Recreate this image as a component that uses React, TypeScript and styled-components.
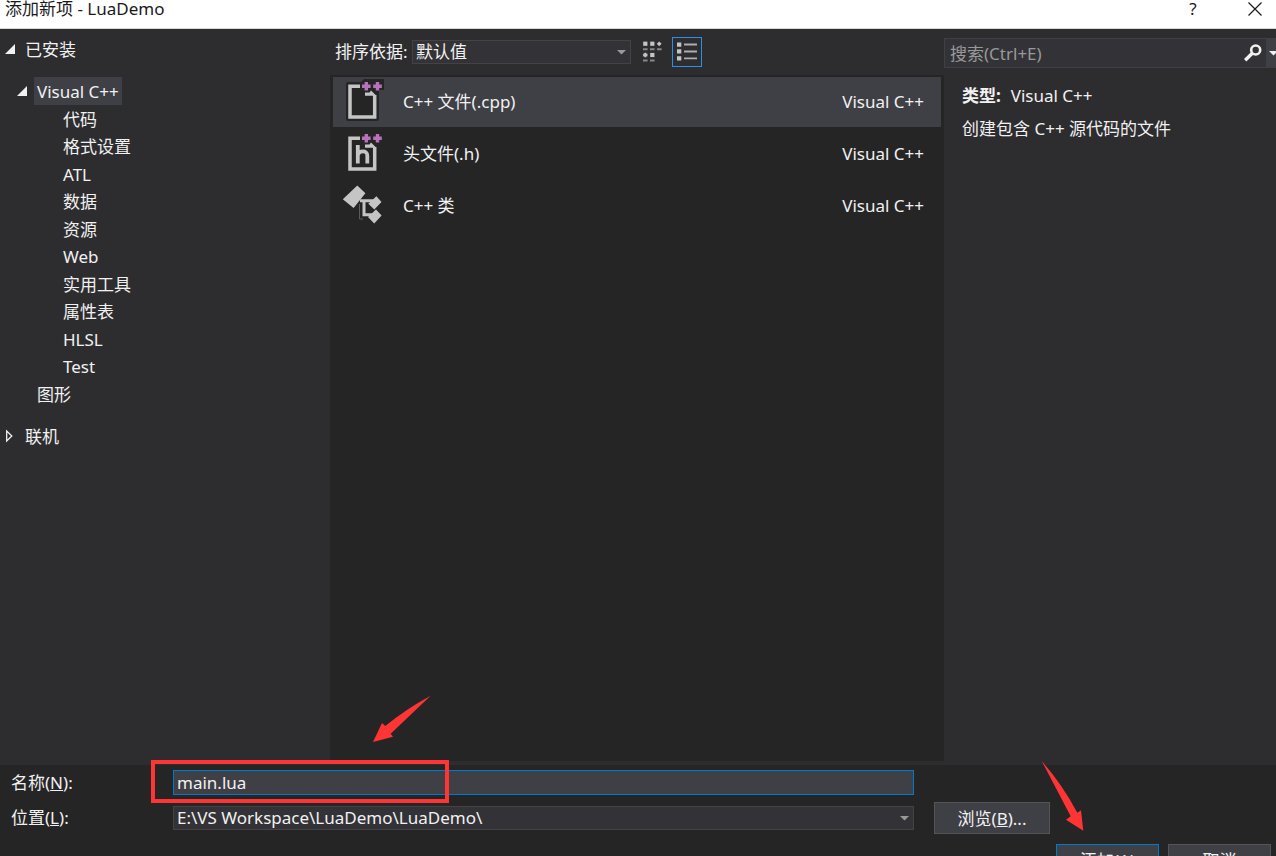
import React, { useState } from "react";
import styled, { createGlobalStyle } from "styled-components";

const color = {
  panel: "#2d2d30",
  deep: "#252526",
  field: "#333337",
  raised: "#3f3f46",
  line: "#434346",
  accent: "#007acc",
  text: "#f1f1f1",
  muted: "#999999",
  icon: "#c5c5c5",
  plus: "#b873b8",
  mark: "#ff3535",
};

const GlobalStyle = createGlobalStyle`
  *, *::before, *::after { box-sizing: border-box; }
  body {
    margin: 0;
    background: ${color.deep};
    color: ${color.text};
    font-family: "Noto Sans", "Noto Sans CJK SC", sans-serif;
    font-size: 17px;
    line-height: 24px;
  }
  button, input, select { font: inherit; color: inherit; margin: 0; }
  button { cursor: pointer; }
  ul { list-style: none; margin: 0; padding: 0; }
  svg { display: block; flex: none; }
`;

const Screen = styled.div`
  height: 100vh;
  overflow: hidden;
`;

const Dialog = styled.div`
  display: flex;
  flex-direction: column;
  height: calc(100vh + 30px);
`;

const TitleBar = styled.header`
  display: flex;
  align-items: flex-start;
  justify-content: space-between;
  height: 29px;
  padding: 0 12px 0 5px;
  background: #ffffff;
  border-bottom: 1px solid #d5dad7;
  color: #1a1a1a;
`;

const Title = styled.h1`
  margin: 0;
  font-size: 17px;
  font-weight: 400;
  line-height: 18px;
`;

const TitleActions = styled.div`
  display: flex;
  gap: 44px;
`;

const TitleButton = styled.button`
  display: flex;
  align-items: center;
  justify-content: center;
  width: 18px;
  height: 17px;
  padding: 0;
  border: 0;
  background: none;
`;

const Body = styled.div`
  display: flex;
  flex: 1;
  min-height: 0;
  background: ${color.panel};
`;

const Sidebar = styled.nav`
  display: flex;
  flex-direction: column;
  gap: 14px;
  width: 330px;
  padding-top: 6px;
`;

const TreeRow = styled.button<{ $indent: number }>`
  display: flex;
  align-items: center;
  width: 100%;
  height: 28px;
  padding: 0 0 0 ${(p) => p.$indent}px;
  border: 0;
  background: none;
  text-align: left;
`;

const Twisty = styled.span`
  display: flex;
  width: 17px;
`;

const TreeLabel = styled.span<{ $selected?: boolean }>`
  padding: 3px 3px 1px;
  background: ${(p) => (p.$selected ? color.raised : "transparent")};
`;

const Branch = styled.ul`
  display: grid;
  grid-auto-rows: 1fr;
  height: 275px;
`;

const Leaf = styled.li`
  display: flex;
  align-items: center;
  min-height: 0;
`;

const Center = styled.main`
  display: flex;
  flex: 1;
  flex-direction: column;
  min-width: 0;
  padding-bottom: 4px;
`;

const Toolbar = styled.div`
  display: flex;
  align-items: center;
  height: 46px;
  padding-left: 5px;
`;

const SortLabel = styled.label`
  width: 77px;
  white-space: nowrap;
`;

const SelectBox = styled.div<{ $width?: string }>`
  display: grid;
  align-items: center;
  width: ${(p) => p.$width ?? "100%"};
  & > * { grid-area: 1 / 1; }
  & > svg { justify-self: end; margin-right: 5px; pointer-events: none; }
`;

const Select = styled.select`
  appearance: none;
  width: 100%;
  height: 24px;
  padding: 0 20px 0 3px;
  border: 1px solid ${color.line};
  border-radius: 0;
  background: ${color.field};
  line-height: 22px;
`;

const ViewButtons = styled.div`
  display: flex;
  gap: 5px;
  margin-left: 6px;
`;

const ViewButton = styled.button<{ $active?: boolean }>`
  display: flex;
  align-items: center;
  justify-content: center;
  width: 30px;
  height: 30px;
  padding: 0;
  border: 1px solid ${(p) => (p.$active ? "#2f8fe8" : "transparent")};
  background: none;
`;

const TemplateList = styled.ul`
  display: flex;
  flex: 1;
  flex-direction: column;
  gap: 2px;
  padding: 2px 3px;
  background: ${color.deep};
`;

const TemplateRow = styled.button<{ $selected: boolean }>`
  display: flex;
  align-items: center;
  width: 100%;
  height: 50px;
  padding: 0 17px 0 7px;
  border: 0;
  background: ${(p) => (p.$selected ? color.raised : "transparent")};
  text-align: left;
`;

const TemplateName = styled.span`
  flex: 1;
  padding-left: 15px;
`;

const Details = styled.aside`
  width: 332px;
  padding-top: 9px;
`;

const SearchBox = styled.div`
  display: flex;
  align-items: center;
  height: 30px;
  border: 1px solid ${color.raised};
  border-right: 0;
  background: ${color.field};
`;

const SearchInput = styled.input`
  flex: 1;
  min-width: 0;
  height: 28px;
  padding: 0 5px;
  border: 0;
  background: none;
  &::placeholder { color: ${color.muted}; opacity: 1; }
`;

const SearchButton = styled.button`
  display: flex;
  padding: 0 3px 0 0;
  border: 0;
  background: none;
`;

const SearchMenuButton = styled.button`
  display: flex;
  align-items: center;
  width: 10px;
  height: 28px;
  padding: 0 0 0 3px;
  border: 0;
  background: ${color.raised};
  overflow: hidden;
`;

const Description = styled.div`
  display: flex;
  flex-direction: column;
  gap: 9px;
  padding: 16px 18px;
  p { margin: 0; }
  strong { margin-right: 10px; }
`;

const Footer = styled.footer`
  position: relative;
  flex: none;
  padding: 5px 5px 10px 11px;
  background: ${color.deep};
`;

const Fields = styled.div`
  display: grid;
  grid-template-columns: 162px 1fr 116px;
  row-gap: 7px;
  align-items: center;
  padding-right: 221px;
  margin-bottom: 10px;
`;

const FieldLabel = styled.label`
  grid-column: 1;
`;

const FieldCell = styled.div`
  position: relative;
  grid-column: 2;
  margin-right: 20px;
`;

const NameInput = styled.input`
  display: block;
  width: 100%;
  height: 25px;
  padding: 0 3px;
  border: 1px solid ${color.accent};
  background: ${color.raised};
  outline: 0;
`;

const PushButton = styled.button<{ $primary?: boolean }>`
  min-width: 103px;
  height: 32px;
  padding: 2px 8px 0;
  border: 1px solid ${(p) => (p.$primary ? color.accent : "#555558")};
  background: ${color.raised};
`;

const Actions = styled.div`
  position: relative;
  display: flex;
  justify-content: flex-end;
  gap: 9px;
`;

const MarkBox = styled.div`
  position: absolute;
  top: -10px;
  left: -22px;
  width: 298px;
  height: 43px;
  border: 4px solid ${color.mark};
  pointer-events: none;
`;

const NameArrow = styled.svg`
  position: absolute;
  top: -75px;
  left: 199px;
  pointer-events: none;
`;

const AddArrow = styled.svg`
  position: absolute;
  top: -84px;
  right: 185px;
  pointer-events: none;
`;

const Expanded = () => (
  <svg width="10" height="10" viewBox="0 0 10 10" aria-hidden="true">
    <path d="M10 0V10H0Z" fill={color.text} />
  </svg>
);

const Collapsed = () => (
  <svg width="9" height="14" viewBox="0 0 9 14" aria-hidden="true">
    <path d="M1.7 2V12L6.8 7Z" fill="none" stroke={color.text} strokeWidth="1.3" />
  </svg>
);

const Caret = ({ fill = color.muted }: { fill?: string }) => (
  <svg width="9" height="5" viewBox="0 0 9 5" aria-hidden="true">
    <path d="M0 0H9L4.5 4.6Z" fill={fill} />
  </svg>
);

const TilesIcon = () => (
  <svg width="20" height="22" viewBox="0 0 20 22" fill={color.icon} aria-hidden="true">
    <path d="M1 .5h4.6v4.6H1zM8 .5h4.6v4.6H8zM1 11.7h4.6v4.6H1zM8 11.7h4.6v4.6H8z" opacity=".3" />
    <path d="M1.3 .8h4v4h-4zM8.3 .8h4v4h-4zM17.2 .4L19.6 2.8L17.2 5.2L14.8 2.8zM3.3 11.4L5.9 14L3.3 16.6L.7 14zM8.3 12h4v4h-4z" />
    <path d="M1 7.3h4.6v2H1zM8 7.3h4.6v2H8zM15 7.3h4.6v2H15zM1 18.6h4.6v2H1zM8 18.6h4.6v2H8z" opacity=".6" />
  </svg>
);

const ListIcon = () => (
  <svg width="20" height="20" viewBox="0 0 20 20" fill={color.icon} aria-hidden="true">
    <path d="M0 .4h4.3v4.3H0zM0 7.3h4.3v4.3H0zM0 14.2h4.3v4.3H0z" />
    <path d="M7 1.6h13v1.9H7zM7 8.5h13v1.9H7zM7 15.4h13v1.9H7z" opacity=".85" />
  </svg>
);

const SearchIcon = () => (
  <svg width="20" height="20" viewBox="0 0 20 20" fill="none" stroke={color.text} aria-hidden="true">
    <circle cx="12.7" cy="7" r="4.5" strokeWidth="2.6" />
    <path d="M9.3 10.3L2.2 17.2" strokeWidth="3.4" />
  </svg>
);

const CloseIcon = () => (
  <svg width="16" height="16" viewBox="0 0 16 16" aria-hidden="true">
    <path d="M1.5 1.5L14.5 14.5M14.5 1.5L1.5 14.5" stroke="#1a1a1a" strokeWidth="1.2" />
  </svg>
);

const FileIcon = ({ header }: { header?: boolean }) => (
  <svg width="48" height="48" viewBox="0 0 48 48" fill="none" aria-hidden="true">
    <path d="M6 6Q6 4 8 4H21L24 1H44V12H39V41Q39 43 37 43H8Q6 43 6 41Z" fill={color.deep} />
    <path d="M20 8.2H10V39H34.7V17" stroke={color.icon} strokeWidth="3.5" />
    <path d="M25 14.4H29.5L31 12.4L36.4 17.8H25Z" fill={color.icon} />
    <path d="M26.3 4V12.6M22 8.3H30.6M37.5 4V12.6M33.2 8.3H41.8" stroke={color.plus} strokeWidth="3.4" />
    {header && (
      <path d="M17.8 15V33.5M17.8 25C19 20.6 27.3 19.8 27.3 25.5V33.5" stroke={color.icon} strokeWidth="3.8" />
    )}
  </svg>
);

const ClassIcon = () => (
  <svg width="48" height="48" viewBox="0 0 48 48" fill="none" aria-hidden="true">
    <path d="M19.5 22V37H23" stroke="#5c5c5e" strokeWidth="1" />
    <path d="M20 18.7H33M24 18.7V32.8H32" stroke={color.icon} strokeWidth="3" />
    <path
      d="M17.3 3.4L25.4 11.2L13.6 26L2.8 17.3ZM36.4 14.2L41.5 20L34.3 27.6L28.3 21.8ZM36 27.6L41.6 33.4L34.2 41.6L28 35Z"
      fill={color.icon}
    />
  </svg>
);

const leaves = ["代码", "格式设置", "ATL", "数据", "资源", "Web", "实用工具", "属性表", "HLSL", "Test"];

const templates = [
  { name: "C++ 文件(.cpp)", icon: <FileIcon /> },
  { name: "头文件(.h)", icon: <FileIcon header /> },
  { name: "C++ 类", icon: <ClassIcon /> },
];

export default function App() {
  const [selected, setSelected] = useState(0);
  const [fileName, setFileName] = useState("main.lua");

  return (
    <Screen>
      <GlobalStyle />
      <Dialog>
        <TitleBar>
          <Title>添加新项 - LuaDemo</Title>
          <TitleActions>
            <TitleButton aria-label="帮助">?</TitleButton>
            <TitleButton aria-label="关闭"><CloseIcon /></TitleButton>
          </TitleActions>
        </TitleBar>

        <Body>
          <Sidebar>
            <TreeRow $indent={5}>
              <Twisty><Expanded /></Twisty>
              <TreeLabel>已安装</TreeLabel>
            </TreeRow>
            <div>
              <TreeRow $indent={17}>
                <Twisty><Expanded /></Twisty>
                <TreeLabel $selected>Visual C++</TreeLabel>
              </TreeRow>
              <Branch>
                {leaves.map((leaf) => (
                  <Leaf key={leaf}>
                    <TreeRow $indent={60}><TreeLabel>{leaf}</TreeLabel></TreeRow>
                  </Leaf>
                ))}
              </Branch>
              <TreeRow $indent={34}><TreeLabel>图形</TreeLabel></TreeRow>
            </div>
            <TreeRow $indent={5}>
              <Twisty><Collapsed /></Twisty>
              <TreeLabel>联机</TreeLabel>
            </TreeRow>
          </Sidebar>

          <Center>
            <Toolbar>
              <SortLabel htmlFor="sort">排序依据:</SortLabel>
              <SelectBox $width="219px">
                <Select id="sort"><option>默认值</option></Select>
                <Caret />
              </SelectBox>
              <ViewButtons>
                <ViewButton aria-label="小图标"><TilesIcon /></ViewButton>
                <ViewButton aria-label="列表" $active><ListIcon /></ViewButton>
              </ViewButtons>
            </Toolbar>
            <TemplateList>
              {templates.map((t, i) => (
                <li key={t.name}>
                  <TemplateRow $selected={i === selected} onClick={() => setSelected(i)}>
                    {t.icon}
                    <TemplateName>{t.name}</TemplateName>
                    <span>Visual C++</span>
                  </TemplateRow>
                </li>
              ))}
            </TemplateList>
          </Center>

          <Details>
            <SearchBox>
              <SearchInput aria-label="搜索" placeholder="搜索(Ctrl+E)" />
              <SearchButton aria-label="开始搜索"><SearchIcon /></SearchButton>
              <SearchMenuButton aria-label="搜索选项"><Caret fill={color.text} /></SearchMenuButton>
            </SearchBox>
            <Description>
              <p><strong>类型:</strong>Visual C++</p>
              <p>创建包含 C++ 源代码的文件</p>
            </Description>
          </Details>
        </Body>

        <Footer>
          <Fields>
            <FieldLabel htmlFor="name">名称(<u>N</u>):</FieldLabel>
            <FieldCell>
              <NameInput id="name" value={fileName} onChange={(e) => setFileName(e.target.value)} />
              <MarkBox />
              <NameArrow width="60" height="48" viewBox="0 0 60 48" aria-hidden="true">
                <path d="M58.6 .7L18.7 38.7L21 41.7L1 47L10 28L13.3 31Q34 14 58.6 .7Z" fill={color.mark} />
              </NameArrow>
            </FieldCell>
            <FieldLabel htmlFor="location">位置(<u>L</u>):</FieldLabel>
            <FieldCell>
              <SelectBox>
                <Select id="location"><option>E:\VS Workspace\LuaDemo\LuaDemo\</option></Select>
                <Caret />
              </SelectBox>
            </FieldCell>
            <PushButton>浏览(<u>B</u>)...</PushButton>
          </Fields>
          <Actions>
            <PushButton $primary>添加(<u>A</u>)</PushButton>
            <PushButton>取消</PushButton>
            <AddArrow width="46" height="72" viewBox="0 0 46 72" aria-hidden="true">
              <path d="M1.7 1Q22 24 37.3 52.7L41 50.3L43.3 70.7L26 59.7L30.7 56.3Z" fill={color.mark} />
            </AddArrow>
          </Actions>
        </Footer>
      </Dialog>
    </Screen>
  );
}
